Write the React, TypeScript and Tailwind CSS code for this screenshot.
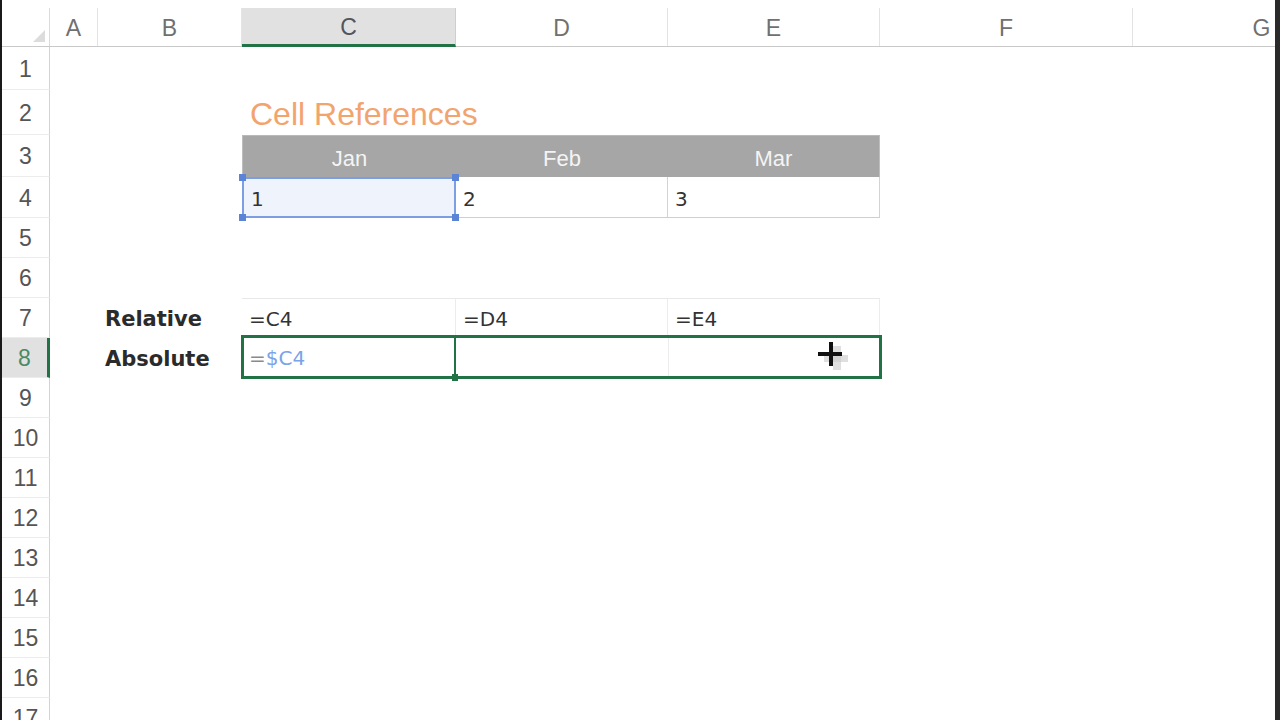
import React from "react";

const colW = [48, 144, 214, 212, 212, 253, 258];
const letters = ["A", "B", "C", "D", "E", "F", "G"];
const rowH = [43, 45, 42, 41, 40, 40, 40, 40, 40, 40, 40, 40, 40, 40, 40, 40, 40];

const dv = "font-['DejaVu_Sans',sans-serif]";

function Handle({ pos }: { pos: string }) {
  return <div className={`absolute w-[7px] h-[7px] bg-[#5b84d6] ${pos}`} />;
}

function cellContent(r: number, c: number): { node?: React.ReactNode; cls?: string } {
  if (r === 2 && c === 2)
    return {
      node: (
        <span className="whitespace-nowrap pl-[8px] text-[32px] leading-none text-[#f2a46e] font-['Liberation_Sans',sans-serif] relative top-[1px]">
          Cell References
        </span>
      ),
      cls: "overflow-visible",
    };
  if (r === 3 && c >= 2 && c <= 4) {
    const t = ["Jan", "Feb", "Mar"][c - 2];
    return {
      node: (
        <span className="w-full text-center text-[22px] pt-[4px] text-[#f4f4f4] font-['Liberation_Sans',sans-serif]">{t}</span>
      ),
      cls:
        "bg-[#a6a6a6] border-t border-t-[#b9b9b9] " +
        (c === 2 ? "border-l border-l-[#bdbdbd]" : c === 4 ? "border-r border-r-[#bdbdbd]" : ""),
    };
  }
  if (r === 4 && c >= 2 && c <= 4) {
    const t = ["1", "2", "3"][c - 2];
    if (c === 2)
      return {
        node: (
          <>
            <span className={`pl-[7px] pt-[3px] text-[20px] text-[#333] ${dv}`}>{t}</span>
            <Handle pos="left-[-5px] top-[-5px]" />
            <Handle pos="right-[-5px] top-[-5px]" />
            <Handle pos="left-[-5px] bottom-[-5px]" />
            <Handle pos="right-[-5px] bottom-[-5px]" />
          </>
        ),
        cls: "relative bg-[#eef3fc] border-2 border-[#7b9fe2]",
      };
    return {
      node: <span className={`pl-[7px] pt-[3px] text-[20px] text-[#333] ${dv}`}>{t}</span>,
      cls: "border-b border-b-[#cfcfcf] border-r border-r-[#d3d3d3]",
    };
  }
  if ((r === 7 || r === 8) && c === 1) {
    const t = r === 7 ? "Relative" : "Absolute";
    return {
      node: <span className={`pl-[7px] pt-[4px] text-[21px] font-bold text-[#2b2b2b] ${dv}`}>{t}</span>,
    };
  }
  if (r === 7 && c >= 2 && c <= 4) {
    const t = ["=C4", "=D4", "=E4"][c - 2];
    return {
      node: <span className={`pl-[7px] text-[20px] text-[#333] ${dv}`}>{t}</span>,
      cls: "border-t border-t-[#e8e8e8] border-r border-r-[#ececec]",
    };
  }
  if (r === 8 && c === 2) {
    return {
      node: (
        <span className={`pl-[7px] text-[20px] ${dv}`}>
          <span className="text-[#8a8a8a]">=</span>
          <span className="text-[#7aa3ea]">$C4</span>
        </span>
      ),
    };
  }
  if (r === 8 && c === 4) {
    return { cls: "border-l border-l-[#ececec]" };
  }
  return {};
}

export default function App() {
  return (
    <div className="flex w-[1280px] h-[720px] overflow-hidden bg-white font-['Liberation_Sans',sans-serif]">
      <div className="w-[2px] shrink-0 bg-[#1a1a1a]" />
      <div className="relative flex-1 overflow-hidden flex flex-col">
        <div className="h-[8px] shrink-0 bg-white" />
        <div className="flex h-[39px] shrink-0 border-b border-b-[#c9c9c9]">
          <div className="w-[48px] shrink-0 border-r border-r-[#dadada] flex items-end justify-end pr-[4px] pb-[4px]">
            <svg width="12" height="12" viewBox="0 0 12 12">
              <polygon points="12,0 12,12 0,12" fill="#dcdcdc" />
            </svg>
          </div>
          {colW.map((w, i) => (
            <div
              key={i}
              style={{ width: w }}
              className={
                "shrink-0 flex items-center justify-center pt-[3px] text-[23px] " +
                (i === 2
                  ? "bg-[#e1e1e1] border-b-[3px] border-b-[#217346] text-[#555] border-r border-r-[#cfcfcf] mb-[-1px]"
                  : "text-[#707070] border-r border-r-[#e3e3e3]")
              }
            >
              {letters[i]}
            </div>
          ))}
        </div>
        {rowH.map((h, ri) => {
          const r = ri + 1;
          return (
            <div key={r} style={{ height: h }} className="flex shrink-0">
              <div
                className={
                  "w-[48px] shrink-0 flex items-center justify-center pt-[2px] text-[23px] border-b border-b-[#ececec] " +
                  (r === 8
                    ? "bg-[#e1e1e1] text-[#4a8a66] border-r-[3px] border-r-[#217346]"
                    : "text-[#555] border-r border-r-[#d3d3d3]")
                }
              >
                {r}
              </div>
              {colW.map((w, c) => {
                const { node, cls } = cellContent(r, c);
                return (
                  <div key={c} style={{ width: w }} className={"shrink-0 flex items-center " + (cls ?? "")}>
                    {node}
                  </div>
                );
              })}
            </div>
          );
        })}

        {/* green selection overlay C8:E8 */}
        <div className="absolute left-[239px] top-[335px] w-[641px] h-[44px] border-[3px] border-[#217346] pointer-events-none">
          <div className="absolute left-[210px] top-0 w-[2px] h-full bg-[#217346]" />
          <div className="absolute left-[208px] bottom-[-5px] w-[6px] h-[7px] bg-[#217346]" />
        </div>

        {/* mouse cursor */}
        <svg className="absolute left-[814px] top-[340px]" width="34" height="30" viewBox="0 0 34 30">
          <rect x="17" y="6" width="8" height="24" fill="#c9c9c9" opacity="0.6" />
          <rect x="8" y="15" width="24" height="7" fill="#c9c9c9" opacity="0.6" />
          <rect x="13" y="2" width="4" height="24" fill="#111" />
          <rect x="2" y="12" width="24" height="4" fill="#111" />
        </svg>
      </div>
      <div className="w-[5px] shrink-0 bg-[#2a2a2a]" />
    </div>
  );
}
